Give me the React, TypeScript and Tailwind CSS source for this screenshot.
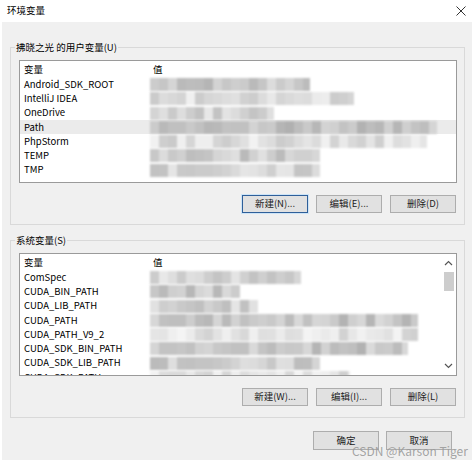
import React from "react";

const FONT = '"Noto Sans CJK SC", "Noto Sans", sans-serif';

function rng(seed: number) {
  let s = seed;
  return () => {
    s = (s * 9301 + 49297) % 233280;
    return s / 233280;
  };
}

function Blur({ len, base, seed }: { len: number; base: number; seed: number }) {
  const r = rng(seed);
  const blocks: number[] = [];
  const n = Math.ceil(len / 9);
  for (let i = 0; i < n; i++) blocks.push(Math.round(base + (r() - 0.5) * 40));
  return (
    <div className="flex h-full blur-[1.2px]">
      {blocks.map((c, i) => (
        <div
          key={i}
          className="h-full"
          style={{ width: i === n - 1 ? len - 9 * (n - 1) : 9, background: `rgb(${c},${c},${c})` }}
        />
      ))}
    </div>
  );
}

type Row = { name: string; len: number; base: number; sel?: boolean };

function List({ rows, scroll }: { rows: Row[]; scroll?: boolean }) {
  return (
    <div className="relative h-[123px] border border-[#9a9a9a] bg-white overflow-hidden">
      <div className="pt-[2px]">
        <div className="flex h-[14.3px] items-center text-[9.5px] leading-none text-black">
          <div className="w-[133px] pl-[4px]">变量</div>
          <div>值</div>
        </div>
        {rows.map((r, i) => (
          <div
            key={r.name}
            className={`flex h-[14.3px] items-center text-[9.5px] leading-none text-black ${r.sel ? "bg-[#ebebeb]" : ""}`}
          >
            <div className="w-[130px] pl-[4px] whitespace-nowrap">{r.name}</div>
            <div className="h-[13px] w-[290px]">
              <Blur len={r.len} base={r.base} seed={i * 17 + r.len} />
            </div>
          </div>
        ))}
      </div>
      {scroll && (
        <div className="absolute right-0 top-0 bottom-0 w-[15px] bg-white flex flex-col items-center">
          <svg width="9" height="6" viewBox="0 0 9 6" className="mt-[6px]">
            <path d="M1 5 L4.5 1.5 L8 5" stroke="#555" strokeWidth="1.2" fill="none" />
          </svg>
          <div className="mt-[6px] h-[19px] w-[10px] bg-[#cdcdcd]" />
          <div className="flex-1" />
          <svg width="9" height="6" viewBox="0 0 9 6" className="mb-[6px]">
            <path d="M1 1 L4.5 4.5 L8 1" stroke="#555" strokeWidth="1.2" fill="none" />
          </svg>
        </div>
      )}
    </div>
  );
}

function Btn({ children, focus }: { children: React.ReactNode; focus?: boolean }) {
  return (
    <div
      className={`flex h-[18px] w-[66px] items-center justify-center text-[9.5px] leading-none text-[#222] bg-[#e1e1e1] border ${
        focus ? "border-[#2f5f99] shadow-[0_0_0_1px_#cde4f7]" : "border-[#adadad]"
      }`}
    >
      {children}
    </div>
  );
}

function Group({
  title,
  rows,
  buttons,
  scroll,
  className,
}: {
  title: string;
  rows: Row[];
  buttons: string[];
  scroll?: boolean;
  className?: string;
}) {
  return (
    <fieldset className={`border border-[#d9d9d9] ${className ?? ""}`}>
      <legend className="ml-[4px] px-[1px] text-[9.5px] leading-[16px] text-black">{title}</legend>
      <div className="pl-[8px] pr-[7px] pt-[5px] pb-[11px]">
        <List rows={rows} scroll={scroll} />
        <div className="mt-[12px] mr-[1px] flex justify-end gap-[8px]">
          {buttons.map((b, i) => (
            <Btn key={b} focus={!scroll && i === 0}>
              {b}
            </Btn>
          ))}
        </div>
      </div>
    </fieldset>
  );
}

const userRows: Row[] = [
  { name: "Android_SDK_ROOT", len: 160, base: 200 },
  { name: "IntelliJ IDEA", len: 204, base: 222 },
  { name: "OneDrive", len: 124, base: 212 },
  { name: "Path", len: 287, base: 195, sel: true },
  { name: "PhpStorm", len: 277, base: 222 },
  { name: "TEMP", len: 170, base: 205 },
  { name: "TMP", len: 170, base: 212 },
];

const sysRows: Row[] = [
  { name: "ComSpec", len: 151, base: 215 },
  { name: "CUDA_BIN_PATH", len: 90, base: 200 },
  { name: "CUDA_LIB_PATH", len: 108, base: 210 },
  { name: "CUDA_PATH", len: 268, base: 198 },
  { name: "CUDA_PATH_V9_2", len: 268, base: 225 },
  { name: "CUDA_SDK_BIN_PATH", len: 258, base: 198 },
  { name: "CUDA_SDK_LIB_PATH", len: 170, base: 205 },
  { name: "CUDA_SDK_PATH", len: 200, base: 225 },
];

export default function App() {
  return (
    <div className="relative h-[463px] w-[474px] bg-white overflow-hidden" style={{ fontFamily: FONT }}>
      <div className="flex h-[22px] items-center justify-between pl-[7px] pr-[8px]">
        <span className="text-[9.5px] leading-none text-black">环境变量</span>
        <svg width="10" height="10" viewBox="0 0 10 10">
          <path d="M0.5 0.5 L9.5 9.5 M9.5 0.5 L0.5 9.5" stroke="#333" strokeWidth="1" />
        </svg>
      </div>
      <div className="mx-[2px] h-[438px] bg-[#f0f0f0] pl-[8px] pr-[7px] pt-[17px]">
        <Group title="拂晓之光 的用户变量(U)" rows={userRows} buttons={["新建(N)...", "编辑(E)...", "删除(D)"]} />
        <Group
          className="mt-[7px]"
          title="系统变量(S)"
          rows={sysRows}
          scroll
          buttons={["新建(W)...", "编辑(I)...", "删除(L)"]}
        />
        <div className="mt-[13px] mr-[13px] flex justify-end gap-[7px]">
          <div className="flex h-[19px] w-[66px] items-center justify-center border border-[#adadad] bg-[#e1e1e1] text-[9.5px] leading-none text-[#222]">
            确定
          </div>
          <div className="flex h-[19px] w-[66px] items-center justify-center border border-[#adadad] bg-[#e1e1e1] text-[9.5px] leading-none text-[#222]">
            取消
          </div>
        </div>
      </div>
      <div className="absolute left-[352px] top-[445px] text-[12px] leading-none text-[#9a9a9a]/90 whitespace-nowrap">
        CSDN @Karson Tiger
      </div>
    </div>
  );
}
